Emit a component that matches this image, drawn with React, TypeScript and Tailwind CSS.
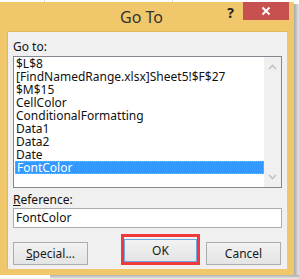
import React from "react";

const items = [
  "$L$8",
  "[FindNamedRange.xlsx]Sheet5!$F$27",
  "$M$15",
  "CellColor",
  "ConditionalFormatting",
  "Data1",
  "Data2",
  "Date",
  "FontColor",
];

const font = { fontFamily: "'Noto Sans', 'Liberation Sans', sans-serif" };

function Chevron({ up }: { up?: boolean }) {
  return (
    <svg width="9" height="6" viewBox="0 0 9 6" className="block">
      <path
        d={up ? "M1 5 L4.5 1.5 L8 5" : "M1 1 L4.5 4.5 L8 1"}
        fill="none"
        stroke="#c2c2c2"
        strokeWidth="1.6"
      />
    </svg>
  );
}

function Button({ label, under, className = "" }: { label: string; under?: boolean; className?: string }) {
  return (
    <button
      className={`h-[23px] text-[12px] text-[#1a1a1a] bg-gradient-to-b from-[#f2f2f2] to-[#e4e4e4] border flex items-center justify-center ${className}`}
    >
      {under ? (
        <span>
          <span className="underline">{label[0]}</span>
          {label.slice(1)}
        </span>
      ) : (
        label
      )}
    </button>
  );
}

export default function App() {
  return (
    <div className="w-[299px] h-[279px] bg-white overflow-hidden flex flex-col" style={font}>
      {/* sheet behind the dialog */}
      <div className="h-[2px] flex shrink-0">
        <div className="w-[45px] border-r border-[#d4d4d4]" />
        <div className="w-[128px] border-r border-[#d4d4d4]" />
      </div>

      <div className="flex">
        {/* window frame */}
        <div className="w-[294px] h-[273px] bg-[#f0c76b] flex flex-col px-[7px] pb-[6px]">
          {/* title bar */}
          <div className="h-[29px] flex items-start shrink-0">
            <div className="flex-1 pt-[5px] pl-[113px] text-[16px] text-[#333] leading-[20px]">Go To</div>
            <div className="pt-[3px] pr-[9px] text-[14px] font-bold text-[#222] leading-[16px]">?</div>
            <div className="w-[46px] h-[18px] bg-[#c75050] flex items-center justify-center mr-[-2px]">
              <svg width="10" height="10" viewBox="0 0 10 10">
                <path d="M1.5 1.5 L8.5 8.5 M8.5 1.5 L1.5 8.5" stroke="#fff" strokeWidth="2" />
              </svg>
            </div>
          </div>

          {/* client area */}
          <div className="flex-1 bg-[#f0f0f0] border-t border-l border-[#e0b85c] flex flex-col pl-[5px] pr-[5px]">
            <div className="pt-[7px] h-[24px] text-[12px] leading-[16px] text-[#111]">Go to:</div>

            {/* list box */}
            <div className="h-[132px] border border-[#828790] bg-white flex">
              <div className="flex-1 flex flex-col">
                {items.map((it, i) => {
                  const sel = i === items.length - 1;
                  return (
                    <div
                      key={it}
                      className={
                        sel
                          ? "h-[13px] ml-[1px] pl-[1px] text-[12px] leading-[12px] whitespace-nowrap bg-[#3399ff] text-white border border-dotted border-[#e8a060]"
                          : "h-[13px] pl-[2px] text-[12px] leading-[13px] whitespace-nowrap text-[#111]"
                      }
                    >
                      {it}
                    </div>
                  );
                })}
              </div>
              <div className="w-[17px] bg-[#f0f0f0] flex flex-col items-center justify-between py-[7px]">
                <Chevron up />
                <Chevron />
              </div>
            </div>

            <div className="pt-[5px] h-[20px] text-[12px] leading-[14px] text-[#111]">
              <span className="underline">R</span>eference:
            </div>

            {/* reference input */}
            <div className="h-[20px] border border-[#abadb3] bg-white flex items-center pl-[2px] text-[12px] text-[#111]">
              FontColor
            </div>

            {/* buttons */}
            <div className="flex items-end mt-[6px] pr-[1px]">
              <Button label="Special..." under className="w-[75px] border-[#acacac]" />
              <div className="ml-[33px] border-[3px] border-[#f03a3a] pt-[2px]">
                <Button label="OK" className="w-[73px] border-[#6fa8e0]" />
              </div>
              <div className="flex-1" />
              <Button label="Cancel" className="w-[75px] border-[#acacac]" />
            </div>
          </div>
        </div>
        {/* right shadow */}
        <div className="w-[5px] h-[271px] mt-[2px] bg-gradient-to-r from-[#a8a8a8] to-[#e6e6e6]" />
      </div>
      <div className="h-[4px] ml-[50px] bg-gradient-to-b from-[#b0b0b0] to-[#eeeeee]" />
    </div>
  );
}
